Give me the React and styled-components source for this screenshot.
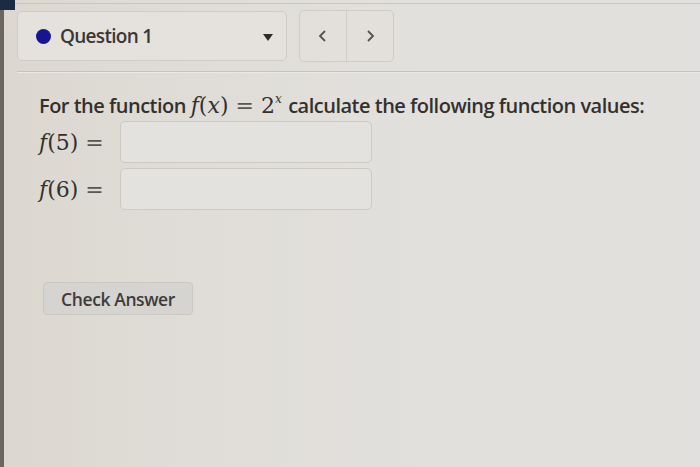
import React from 'react';
import styled, { createGlobalStyle } from 'styled-components';

const GlobalStyle = createGlobalStyle`
  html, body {
    margin: 0;
    padding: 0;
  }
  body {
    width: 700px;
    height: 467px;
    overflow: hidden;
    font-family: 'Open Sans', 'Liberation Sans', sans-serif;
    background: linear-gradient(90deg, #dcd8d0 0%, #e0ddd8 30%, #e2e0dd 60%, #e1e0de 100%);
  }
`;

const Page = styled.div`
  position: relative;
  width: 700px;
  height: 467px;
  padding-left: 5px;
  box-sizing: border-box;
  border-left: 4px solid #6b6660;
`;

const Corner = styled.div`
  position: absolute;
  left: -4px;
  top: 0;
  width: 15px;
  height: 10px;
  background: #1c2a44;
`;

const TopLine = styled.div`
  margin-left: 6px;
  height: 3px;
  border-bottom: 1px solid #c9c6c1;
`;

const Header = styled.div`
  display: flex;
  align-items: center;
  gap: 12px;
  padding: 6px 0 0 8px;
`;

const Select = styled.div`
  width: 270px;
  height: 50px;
  box-sizing: border-box;
  border: 1px solid #cfccc7;
  border-radius: 5px;
  background: #e5e2dd;
  display: flex;
  align-items: center;
  padding: 0 13px 0 18px;
`;

const Dot = styled.span`
  width: 15px;
  height: 15px;
  border-radius: 50%;
  background: #17168f;
  margin-right: 9px;
  flex-shrink: 0;
`;

const SelectLabel = styled.span`
  flex: 1;
  font-size: 19px;
  font-weight: 600;
  color: #3a3835;
  letter-spacing: -0.7px;
`;

const Caret = styled.span`
  width: 0;
  height: 0;
  border-left: 5px solid transparent;
  border-right: 5px solid transparent;
  border-top: 7px solid #2e2c2a;
  margin-top: 2px;
`;

const Nav = styled.div`
  display: flex;
  height: 50px;
  border: 1px solid #cfccc7;
  border-radius: 5px;
  overflow: hidden;
  background: #e3e0dc;
`;

const NavButton = styled.div`
  width: 46px;
  display: flex;
  align-items: center;
  justify-content: center;
  color: #55524e;
  & + & {
    border-left: 1px solid #cfccc7;
  }
`;

const Divider = styled.div`
  margin: 9px 0 0 8px;
  border-top: 1px solid #c6c3be;
  border-bottom: 1px solid #ebe9e6;
`;

const Body = styled.div`
  padding: 19px 0 0 30px;
  color: #33312e;
`;

const Prompt = styled.div`
  font-size: 20px;
  font-weight: 600;
  letter-spacing: -0.5px;
  line-height: 28px;
  white-space: nowrap;
`;

const M = styled.span`
  font-family: 'DejaVu Serif', 'Liberation Serif', serif;
  font-style: ${p => (p.$i ? 'italic' : 'normal')};
  font-weight: 400;
  font-size: 22px;
  letter-spacing: 0;
`;

const Eq = styled.span`
  font-family: 'DejaVu Serif', 'Liberation Serif', serif;
  font-size: 22px;
  font-weight: 400;
  color: #5a5753;
  margin: 0 7px;
  letter-spacing: 0;
`;

const Sup = styled.sup`
  font-family: 'DejaVu Serif', 'Liberation Serif', serif;
  font-style: italic;
  font-weight: 400;
  font-size: 12px;
  vertical-align: 10px;
  line-height: 0;
  margin-right: 7px;
`;

const Rows = styled.div`
  display: flex;
  flex-direction: column;
  gap: 5px;
  margin-top: 1px;
`;

const Row = styled.div`
  display: flex;
  align-items: center;
`;

const RowLabel = styled.div`
  width: 81px;
  white-space: nowrap;
`;

const Input = styled.div`
  width: 252px;
  height: 42px;
  box-sizing: border-box;
  border: 1.5px solid #cdcac5;
  border-radius: 5px;
  background: #e4e2df;
`;

const CheckButton = styled.div`
  margin: 72px 0 0 4px;
  width: 150px;
  height: 33px;
  box-sizing: border-box;
  border: 1px solid #cbc8c3;
  border-radius: 4px;
  background: #d6d4d0;
  display: flex;
  align-items: center;
  justify-content: center;
  font-size: 17.5px;
  font-weight: 600;
  letter-spacing: -0.4px;
  color: #3e3c3a;
`;

const Chevron = ({ dir }) => (
  <svg width="12" height="16" viewBox="0 0 12 16" fill="none" stroke="currentColor" strokeWidth="1.8">
    {dir === 'left' ? <path d="M8 3 L3 8 L8 13" /> : <path d="M4 3 L9 8 L4 13" />}
  </svg>
);

const F = ({ n }) => (
  <>
    <M $i>f</M>
    <M>({n})</M>
  </>
);

export default function App() {
  return (
    <>
      <GlobalStyle />
      <Page>
        <Corner />
        <TopLine />
        <Header>
          <Select>
            <Dot />
            <SelectLabel>Question 1</SelectLabel>
            <Caret />
          </Select>
          <Nav>
            <NavButton><Chevron dir="left" /></NavButton>
            <NavButton><Chevron dir="right" /></NavButton>
          </Nav>
        </Header>
        <Divider />
        <Body>
          <Prompt>
            For the function <M $i>f</M><M>(</M><M $i>x</M><M>)</M>
            <Eq>=</Eq>
            <M>2</M><Sup>x</Sup>calculate the following function values:
          </Prompt>
          <Rows>
            <Row>
              <RowLabel><F n={5} /><Eq>=</Eq></RowLabel>
              <Input />
            </Row>
            <Row>
              <RowLabel><F n={6} /><Eq>=</Eq></RowLabel>
              <Input />
            </Row>
          </Rows>
          <CheckButton>Check Answer</CheckButton>
        </Body>
      </Page>
    </>
  );
}
